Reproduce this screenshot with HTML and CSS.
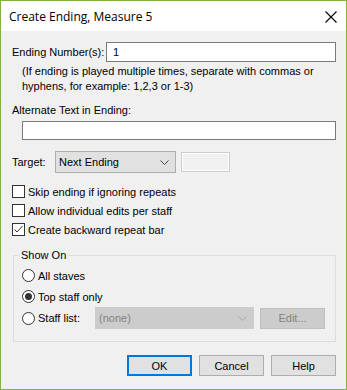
FILE: index.html
```html
<!DOCTYPE html>
<html>
<head>
<meta charset="utf-8">
<link rel="stylesheet" href="styles.css">
</head>
<body>
<div class="window">
  <div class="titlebar">
    <span class="title">Create Ending, Measure 5</span>
    <svg class="close" width="12" height="12" viewBox="0 0 12 12"><path d="M0.5 0.5 L11.5 11.5 M11.5 0.5 L0.5 11.5" stroke="#000" stroke-width="1.1" fill="none"/></svg>
  </div>
  <div class="content">
    <div class="row r-num">
      <span class="lbl-num">Ending Number(s):</span>
      <div class="input num">1</div>
    </div>
    <p class="help">(If ending is played multiple times, separate with commas or<br>hyphens, for example: 1,2,3 or 1-3)</p>
    <div class="lbl-alt">Alternate Text in Ending:</div>
    <div class="input alt"></div>
    <div class="row r-target">
      <span class="lbl-target">Target:</span>
      <div class="select target"><span>Next Ending</span><svg class="chev" width="9" height="5" viewBox="0 0 9 5"><path d="M0.5 0.5 L4.5 4.5 L8.5 0.5" stroke="#444" stroke-width="1" fill="none"/></svg></div>
      <div class="disabled-edit"></div>
    </div>
    <div class="checks">
      <div class="check"><span class="box"></span>Skip ending if ignoring repeats</div>
      <div class="check"><span class="box"></span>Allow individual edits per staff</div>
      <div class="check"><span class="box"><svg width="11" height="11" viewBox="0 0 11 11"><path d="M1.5 5.5 L4 8 L9.5 2" stroke="#333" stroke-width="1" fill="none"/></svg></span>Create backward repeat bar</div>
    </div>
    <fieldset class="group">
      <legend>Show On</legend>
      <div class="radios">
        <div class="radio-row"><span class="radio"></span>All staves</div>
        <div class="radio-row"><span class="radio on"></span>Top staff only</div>
        <div class="radio-row r3"><span class="radio"></span><span class="lbl-staff">Staff list:</span>
          <div class="select staff dis"><span>(none)</span><svg class="chev" width="9" height="5" viewBox="0 0 9 5"><path d="M0.5 0.5 L4.5 4.5 L8.5 0.5" stroke="#a8a8a8" stroke-width="1" fill="none"/></svg></div>
          <div class="btn edit">Edit...</div>
        </div>
      </div>
    </fieldset>
    <div class="buttons">
      <div class="btn ok">OK</div>
      <div class="btn">Cancel</div>
      <div class="btn">Help</div>
    </div>
  </div>
</div>
</body>
</html>
```
FILE: styles.css
```css
html, body { margin: 0; padding: 0; background: #f0f0f0; }
.window {
  width: 347px; height: 390px; box-sizing: border-box;
  border: 1px solid #82b23e;
  background: #f0f0f0;
  font-family: "Liberation Sans", Arial, sans-serif;
  font-size: 11px; color: #000;
  display: flex; flex-direction: column;
}
.titlebar {
  height: 30px; background: #fff;
  display: flex; align-items: center; justify-content: space-between;
  padding: 0 9px 0 8px;
}
.title { font-family: "Open Sans", "Noto Sans", sans-serif; font-size: 12px; }
.close { display: block; margin-top: 1px; }
.content { padding: 0 10px 0 11px; }
.row { display: flex; align-items: center; }
.r-num { margin-top: 11px; }
.lbl-num { width: 94px; }
.input { background: #fff; border: 1px solid #7a7a7a; box-sizing: border-box; }
.input.num { flex: 1; height: 20px; line-height: 18px; padding-left: 6px; }
.help { margin: 2px 0 0 10px; line-height: 15px; }
.lbl-alt { margin-top: 9px; line-height: 15px; }
.input.alt { margin: 3px 0 0 10px; height: 19px; }
.r-target { margin-top: 11px; }
.lbl-target { width: 43px; }
.select {
  box-sizing: border-box; height: 22px;
  background: #e1e1e1; border: 1px solid #adadad;
  display: flex; align-items: center; justify-content: space-between;
  padding: 0 6px 0 3px;
}
.select.target { width: 121px; }
.disabled-edit {
  width: 49px; height: 20px; box-sizing: border-box; margin-left: 5px;
  border: 1px solid #cccccc; box-shadow: inset 0 0 0 1px #fff; background: #f0f0f0;
}
.checks { margin-top: 9px; }
.check { height: 19px; display: flex; align-items: center; }
.box {
  width: 13px; height: 13px; box-sizing: border-box; border: 1px solid #333;
  background: #fff; margin-right: 3px; display: flex; align-items: center; justify-content: center;
}
.box svg { display: block; }
.group {
  margin: 9px 0 0 1px; padding: 0 0 12px 0;
  border: 1px solid #dcdcdc; min-width: 0;
}
.group legend { margin-left: 5px; padding: 0 2px; line-height: 15px; }
.radios { padding-left: 8px; margin-top: 2px; }
.radio-row { height: 21px; display: flex; align-items: center; }
.radio-row.r3 { height: 22px; }
.radio {
  width: 13px; height: 13px; box-sizing: border-box; border: 1px solid #333;
  border-radius: 50%; background: #fff; margin-right: 3px; position: relative;
}
.radio.on::after {
  content: ""; position: absolute; left: 2px; top: 2px; width: 7px; height: 7px;
  border-radius: 50%; background: #333;
}
.lbl-staff { width: 57px; }
.select.staff { width: 159px; }
.select.dis { background: #cccccc; border-color: #cccccc; color: #838383; }
.btn {
  box-sizing: border-box; width: 65px; height: 21px;
  background: #e1e1e1; border: 1px solid #adadad;
  display: flex; align-items: center; justify-content: center;
}
.btn.edit { margin-left: 6px; background: #cccccc; border-color: #bfbfbf; color: #838383; }
.btn.ok { border: 2px solid #0078d7; }
.buttons { display: flex; justify-content: flex-end; gap: 7px; margin-top: 13px; }
```
